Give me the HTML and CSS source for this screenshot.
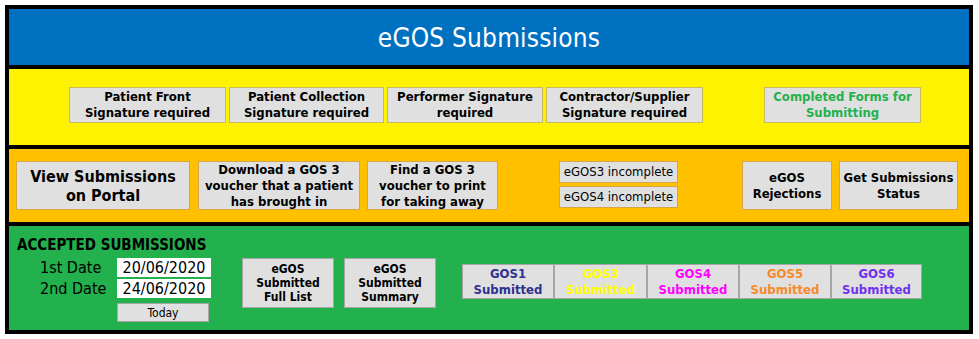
FILE: index.html
```html
<!DOCTYPE html>
<html lang="en">
<head>
<meta charset="utf-8">
<title>eGOS Submissions</title>
<link rel="stylesheet" href="styles.css">
</head>
<body>
<div class="frame">
  <header class="band band-blue">
    <h1 class="title">eGOS Submissions</h1>
  </header>

  <section class="band band-yellow">
    <div class="btn btn-y w157">Patient Front<br>Signature required</div>
    <div class="btn btn-y w155">Patient Collection<br>Signature required</div>
    <div class="btn btn-y w156">Performer Signature<br>required</div>
    <div class="btn btn-y w157">Contractor/Supplier<br>Signature required</div>
    <div class="btn btn-y w157 green-text push">Completed Forms for<br>Submitting</div>
  </section>

  <section class="band band-orange">
    <div class="btn btn-o big w174">View Submissions<br>on Portal</div>
    <div class="btn btn-o w162">Download a GOS 3<br>voucher that a patient<br>has brought in</div>
    <div class="btn btn-o w131">Find a GOS 3<br>voucher to print<br>for taking away</div>
    <div class="stack">
      <div class="btn btn-o small">eGOS3 incomplete</div>
      <div class="btn btn-o small">eGOS4 incomplete</div>
    </div>
    <div class="btn btn-o w90 rej">eGOS<br>Rejections</div>
    <div class="btn btn-o w119">Get Submissions<br>Status</div>
  </section>

  <section class="band band-green">
    <div class="accepted">
      <div class="acc-title">ACCEPTED SUBMISSIONS</div>
      <div class="dates">
        <span class="date-label">1st Date</span>
        <span class="date-box">20/06/2020</span>
        <span class="date-label">2nd Date</span>
        <span class="date-box">24/06/2020</span>
        <span></span>
        <span class="btn btn-g today">Today</span>
      </div>
    </div>
    <div class="btn btn-g sub first-sub">eGOS<br>Submitted<br>Full List</div>
    <div class="btn btn-g sub">eGOS<br>Submitted<br>Summary</div>
    <div class="gos-row">
      <div class="btn btn-g gos c1 w92">GOS1<br>Submitted</div>
      <div class="btn btn-g gos c3 w93">GOS3<br>Submitted</div>
      <div class="btn btn-g gos c4 w92">GOS4<br>Submitted</div>
      <div class="btn btn-g gos c5 w92">GOS5<br>Submitted</div>
      <div class="btn btn-g gos c6 w91">GOS6<br>Submitted</div>
    </div>
  </section>
</div>
</body>
</html>
```

FILE: styles.css
```css
* { box-sizing: border-box; }

html, body {
  margin: 0;
  padding: 0;
  background: #ffffff;
}

body {
  font-family: "DejaVu Sans Condensed", "DejaVu Sans", "Liberation Sans", sans-serif;
  color: #000;
}

.frame {
  margin: 5px 0 0 5px;
  width: 968px;
  background: #000;
  padding: 4px;
  display: flex;
  flex-direction: column;
  gap: 4px;
}

.band { display: flex; }

.band-blue {
  height: 56px;
  background: #0070c0;
  align-items: center;
  justify-content: center;
}

.title {
  margin: 0;
  font-weight: normal;
  font-size: 26px;
  color: #fff;
  letter-spacing: 0.2px;
  padding-top: 1px;
}

.btn {
  background: #e0e0e0;
  display: flex;
  align-items: center;
  justify-content: center;
  text-align: center;
  font-weight: bold;
  font-size: 13px;
  line-height: 16px;
}

/* Yellow band */
.band-yellow {
  height: 76px;
  background: #fff200;
  padding: 18px 0 0 60px;
  gap: 3px;
  align-items: flex-start;
}
.btn-y { height: 36px; border: 1px solid #c9b963; }
.w155 { width: 155px; }
.w156 { width: 156px; }
.w157 { width: 157px; }
.push { margin-left: 58px; }
.green-text { color: #22b14c; }

/* Orange band */
.band-orange {
  height: 73px;
  background: #ffc000;
  padding: 12px 0 0 7px;
  align-items: flex-start;
}
.btn-o { height: 49px; border: 1px solid #d7a640; }
.big { font-size: 16px; line-height: 19px; }
.w174 { width: 174px; }
.w162 { width: 162px; margin-left: 8px; }
.w131 { width: 131px; margin-left: 7px; }
.w90 { width: 90px; }
.w119 { width: 119px; margin-left: 7px; }
.stack {
  display: flex;
  flex-direction: column;
  gap: 3px;
  margin-left: 61px;
}
.small {
  width: 119px;
  height: 22px;
  font-weight: normal;
  font-size: 13px;
}
.rej { margin-left: 64px; }

/* Green band */
.band-green {
  height: 104px;
  background: #22b14c;
  padding: 0 0 0 8px;
  align-items: flex-start;
}
.accepted {
  display: flex;
  flex-direction: column;
  padding-top: 10px;
}
.acc-title {
  font-weight: bold;
  font-size: 15px;
  line-height: 18px;
  height: 22px;
  white-space: nowrap;
}
.dates {
  display: grid;
  grid-template-columns: 77px 94px;
  grid-template-rows: 19px 19px 19px;
  row-gap: 2px;
  padding-left: 23px;
}
.date-label {
  font-size: 16px;
  line-height: 19px;
  white-space: nowrap;
}
.date-box {
  background: #fff;
  font-size: 16px;
  line-height: 19px;
  text-align: center;
}
.today {
  width: 92px;
  height: 19px;
  margin-top: 3px;
  font-weight: normal;
  font-size: 12px;
  border: 1px solid #b0b0b0;
}
.btn-g { border: 1px solid #a6a6a6; }
.sub {
  width: 92px;
  height: 50px;
  margin-top: 32px;
  margin-left: 10px;
  font-size: 12px;
  line-height: 14px;
}
.first-sub { margin-left: 31px; }
.gos-row {
  display: flex;
  margin-top: 38px;
  margin-left: 26px;
}
.gos { height: 35px; border-width: 1px; }
.w91 { width: 91px; }
.w92 { width: 92px; }
.w93 { width: 93px; }
.c1 { color: #2e3192; }
.c3 { color: #ffff00; }
.c4 { color: #ff00ff; }
.c5 { color: #f7892b; }
.c6 { color: #7030f0; }
```
